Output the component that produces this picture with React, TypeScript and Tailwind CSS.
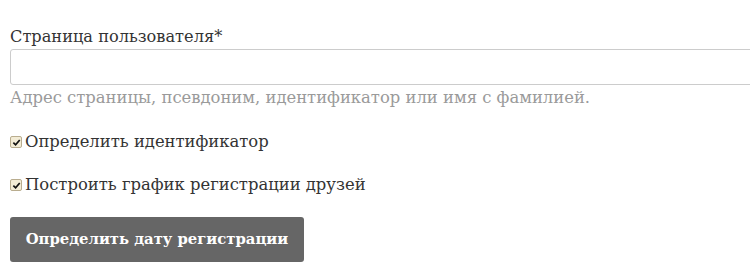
const Check = ({ label }: { label: string }) => (
  <label className="flex items-center gap-[3px] text-[16.4px] leading-[22px] text-[#333]">
    <span className="flex h-[12px] w-[12px] items-center justify-center rounded-[2px] border border-[#b9ad8f] bg-[#f3ecd6]">
      <svg viewBox="0 0 10 10" className="h-[9px] w-[9px]">
        <path d="M1.5 5.2 L4 7.6 L8.6 2.2" fill="none" stroke="#111" strokeWidth="1.9" />
      </svg>
    </span>
    {label}
  </label>
);

export default function App() {
  return (
    <div
      className="h-[277px] w-[750px] overflow-hidden bg-white pl-[10px] pt-[26px]"
      style={{ fontFamily: '"DejaVu Serif", serif' }}
    >
      <div className="text-[16.2px] leading-[22px] text-[#333]">Страница пользователя*</div>
      <div className="mt-[1px] h-[36px] w-[760px] rounded-[3px] border border-[#cccccc] bg-white" />
      <div className="mt-[2px] text-[16.4px] leading-[22px] text-[#9a9a9a]">
        Адрес страницы, псевдоним, идентификатор или имя с фамилией.
      </div>
      <div className="mt-[22px] flex flex-col gap-[21px]">
        <Check label="Определить идентификатор" />
        <Check label="Построить график регистрации друзей" />
      </div>
      <button className="mt-[21px] h-[45px] w-[294px] rounded-[3px] bg-[#666666] text-[14.8px] font-bold text-white">
        Определить дату регистрации
      </button>
    </div>
  );
}
